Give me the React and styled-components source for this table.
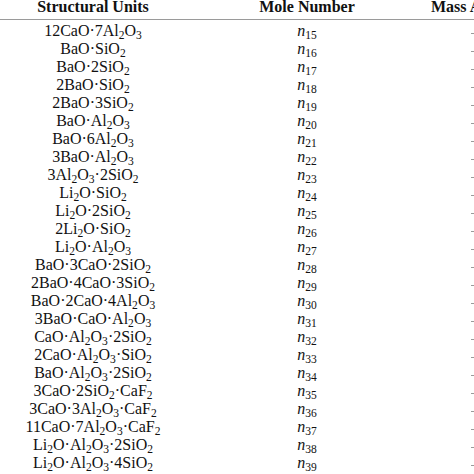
import React from "react";
import styled, { createGlobalStyle } from "styled-components";

const Global = createGlobalStyle`
  html, body { margin: 0; padding: 0; background: #fff; overflow: hidden; }
  body { font-family: "Liberation Serif", "Times New Roman", serif; color: #111; }
`;

const Page = styled.div`
  width: 474px;
  height: 474px;
  overflow: hidden;
`;

const Table = styled.table`
  width: 660px;
  table-layout: fixed;
  border-collapse: collapse;
  font-size: 16px;
  line-height: 18px;
`;

const Col = styled.col`
  width: ${(p) => p.$w}px;
`;

const Th = styled.th`
  font-weight: bold;
  line-height: 13px;
  padding: 0 0 6px;
  border-bottom: 1px solid #9a9a9a;
  white-space: nowrap;
  text-align: ${(p) => (p.$left ? "left" : "center")};
  padding-left: ${(p) => (p.$left ? "3px" : "0")};
`;

const Row = styled.tr`
  &:first-child td { padding-top: 2px; }
`;

const Td = styled.td`
  padding: 0;
  height: 18px;
  white-space: nowrap;
  text-align: center;
`;

const DashCell = styled.td`
  padding: 0 0 0 43px;
  text-align: left;
`;

const Dash = styled.span`
  display: inline-block;
  width: 8px;
  height: 1px;
  margin-bottom: 2px;
  background: #9a9a9a;
`;

const Sub = styled.sub`
  font-size: 0.72em;
  line-height: 0;
  vertical-align: -0.3em;
`;

const Var = styled.i`
  font-style: italic;
`;

function Formula({ text }) {
  const parts = [];
  let i = 0;
  let key = 0;
  while (i < text.length) {
    if (text[i] === "_") {
      let j = i + 1;
      while (j < text.length && /[0-9]/.test(text[j])) j++;
      parts.push(<Sub key={key++}>{text.slice(i + 1, j)}</Sub>);
      i = j;
    } else {
      let j = i;
      while (j < text.length && text[j] !== "_") j++;
      parts.push(<React.Fragment key={key++}>{text.slice(i, j)}</React.Fragment>);
      i = j;
    }
  }
  return <>{parts}</>;
}

const rows = [
  "12CaO·7Al_2O_3",
  "BaO·SiO_2",
  "BaO·2SiO_2",
  "2BaO·SiO_2",
  "2BaO·3SiO_2",
  "BaO·Al_2O_3",
  "BaO·6Al_2O_3",
  "3BaO·Al_2O_3",
  "3Al_2O_3·2SiO_2",
  "Li_2O·SiO_2",
  "Li_2O·2SiO_2",
  "2Li_2O·SiO_2",
  "Li_2O·Al_2O_3",
  "BaO·3CaO·2SiO_2",
  "2BaO·4CaO·3SiO_2",
  "BaO·2CaO·4Al_2O_3",
  "3BaO·CaO·Al_2O_3",
  "CaO·Al_2O_3·2SiO_2",
  "2CaO·Al_2O_3·SiO_2",
  "BaO·Al_2O_3·2SiO_2",
  "3CaO·2SiO_2·CaF_2",
  "3CaO·3Al_2O_3·CaF_2",
  "11CaO·7Al_2O_3·CaF_2",
  "Li_2O·Al_2O_3·2SiO_2",
  "Li_2O·Al_2O_3·4SiO_2",
];

export default function App() {
  return (
    <Page>
      <Global />
      <Table>
        <colgroup>
          <Col $w={186} />
          <Col $w={242} />
          <Col $w={232} />
        </colgroup>
        <thead>
          <tr>
            <Th>Structural Units</Th>
            <Th>Mole Number</Th>
            <Th $left>Mass Action Concentration</Th>
          </tr>
        </thead>
        <tbody>
          {rows.map((f, idx) => (
            <Row key={f}>
              <Td>
                <Formula text={f} />
              </Td>
              <Td>
                <Var>n</Var>
                <Sub>{15 + idx}</Sub>
              </Td>
              <DashCell>
                <Dash />
              </DashCell>
            </Row>
          ))}
        </tbody>
      </Table>
    </Page>
  );
}
